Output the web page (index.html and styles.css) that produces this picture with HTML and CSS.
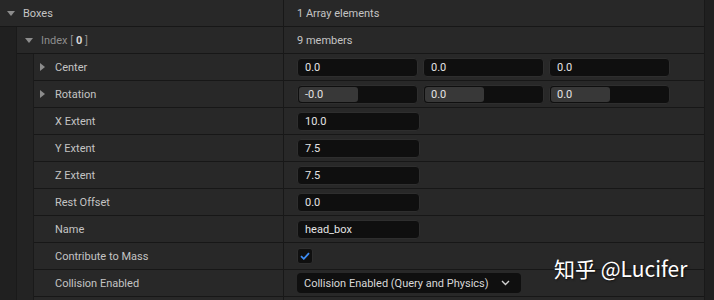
FILE: index.html
```html
<!DOCTYPE html>
<html lang="en">
<head>
    <meta charset="UTF-8">
    <title>Details - Boxes</title>
    <link rel="stylesheet" href="styles.css">
</head>
<body>
    <div class="panel">
        <div class="rows">
            <!-- Boxes -->
            <div class="row">
                <div class="name-col">
                    <div class="cell name lvl0"><span class="arrow-down"></span>Boxes</div>
                </div>
                <div class="cell value">1 Array elements</div>
            </div>

            <!-- Index [0] -->
            <div class="row">
                <div class="name-col">
                    <div class="strip"></div>
                    <div class="cell name lvl1"><span class="arrow-down"></span><span class="dim">Index [ <b>0</b> ]</span></div>
                </div>
                <div class="cell value">9 members</div>
            </div>

            <div class="row">
                <div class="name-col">
                    <div class="strip"></div><div class="strip"></div>
                    <div class="cell name lvl2 expander"><span class="arrow-right"></span>Center</div>
                </div>
                <div class="cell value">
                    <div class="field w121">0.0</div>
                    <div class="field w121">0.0</div>
                    <div class="field w121">0.0</div>
                </div>
            </div>

            <div class="row">
                <div class="name-col">
                    <div class="strip"></div><div class="strip"></div>
                    <div class="cell name lvl2 expander"><span class="arrow-right"></span>Rotation</div>
                </div>
                <div class="cell value">
                    <div class="field w121 slider"><span class="fill" style="width: 59px"></span><span class="num">-0.0</span></div>
                    <div class="field w121 slider"><span class="fill" style="width: 59px"></span><span class="num">0.0</span></div>
                    <div class="field w121 slider"><span class="fill" style="width: 59px"></span><span class="num">0.0</span></div>
                </div>
            </div>

            <div class="row">
                <div class="name-col">
                    <div class="strip"></div><div class="strip"></div>
                    <div class="cell name lvl2">X Extent</div>
                </div>
                <div class="cell value"><div class="field w123">10.0</div></div>
            </div>

            <div class="row">
                <div class="name-col">
                    <div class="strip"></div><div class="strip"></div>
                    <div class="cell name lvl2">Y Extent</div>
                </div>
                <div class="cell value"><div class="field w123">7.5</div></div>
            </div>

            <div class="row">
                <div class="name-col">
                    <div class="strip"></div><div class="strip"></div>
                    <div class="cell name lvl2">Z Extent</div>
                </div>
                <div class="cell value"><div class="field w123">7.5</div></div>
            </div>

            <div class="row">
                <div class="name-col">
                    <div class="strip"></div><div class="strip"></div>
                    <div class="cell name lvl2">Rest Offset</div>
                </div>
                <div class="cell value"><div class="field w123">0.0</div></div>
            </div>

            <div class="row">
                <div class="name-col">
                    <div class="strip"></div><div class="strip"></div>
                    <div class="cell name lvl2">Name</div>
                </div>
                <div class="cell value"><div class="field w123">head_box</div></div>
            </div>

            <div class="row">
                <div class="name-col">
                    <div class="strip"></div><div class="strip"></div>
                    <div class="cell name lvl2">Contribute to Mass</div>
                </div>
                <div class="cell value">
                    <div class="checkbox">
                        <svg width="10" height="8" viewBox="0 0 10 8"><path d="M1 4.2 L3.8 6.8 L9 1.2" fill="none" stroke="#3d8bf2" stroke-width="1.8"/></svg>
                    </div>
                </div>
            </div>

            <div class="row">
                <div class="name-col">
                    <div class="strip"></div><div class="strip"></div>
                    <div class="cell name lvl2">Collision Enabled</div>
                </div>
                <div class="cell value">
                    <div class="combo">Collision Enabled (Query and Physics)
                        <svg width="9" height="6" viewBox="0 0 9 6"><path d="M1 1 L4.5 4.5 L8 1" fill="none" stroke="#d0d0d0" stroke-width="1.4"/></svg>
                    </div>
                </div>
            </div>

            <div class="row">
                <div class="name-col">
                    <div class="strip"></div><div class="strip"></div>
                    <div class="cell name lvl2"></div>
                </div>
                <div class="cell value"></div>
            </div>
        </div>
        <div class="scrollbar"></div>
    </div>

    <div class="watermark">知乎 @Lucifer</div>
</body>
</html>
```

FILE: styles.css
```css
* {
    margin: 0;
    padding: 0;
    box-sizing: border-box;
}

body {
    font-family: Roboto, "Liberation Sans", sans-serif;
    font-size: 11px;
    color: #c4c4c4;
    background-color: #1c1c1c;
    width: 714px;
    height: 300px;
    overflow: hidden;
    position: relative;
}

/* Painel de detalhes */
.panel {
    display: flex;
    height: 300px;
    overflow: hidden;
}

.rows {
    width: 704px;
    display: flex;
    flex-direction: column;
}

.row {
    display: grid;
    grid-template-columns: 284px 1fr;
    height: 27px;
    flex: none;
}

.name-col {
    display: flex;
    border-right: 1px solid #181818;
}

/* Faixas de indentação */
.strip {
    width: 17px;
    flex: none;
    background-color: #202020;
    border-right: 1px solid #1a1a1a;
}

.strip + .strip {
    background-color: #232323;
}

.cell {
    display: flex;
    align-items: center;
    background-color: #282828;
    border-bottom: 1px solid #171717;
}

.name {
    flex: 1;
}

.lvl0 {
    padding-left: 7px;
}

.lvl1 {
    padding-left: 8px;
}

.lvl2 {
    padding-left: 21px;
}

.lvl2.expander {
    padding-left: 6px;
}

.value {
    padding-left: 13px;
    gap: 5px;
}

.dim {
    color: #8d8d8d;
}

.dim b {
    color: #d8d8d8;
    font-weight: bold;
}

/* Setas */
.arrow-down {
    width: 0;
    height: 0;
    border-left: 4px solid transparent;
    border-right: 4px solid transparent;
    border-top: 5px solid #8c8c8c;
    margin-right: 8px;
}

.arrow-right {
    width: 0;
    height: 0;
    border-top: 4px solid transparent;
    border-bottom: 4px solid transparent;
    border-left: 5px solid #8c8c8c;
    margin-right: 10px;
}

/* Campos */
.field {
    height: 19px;
    background-color: #0f0f0f;
    border: 1px solid #2e2e2e;
    border-radius: 4px;
    color: #e4e4e4;
    padding-left: 7px;
    display: flex;
    align-items: center;
    position: relative;
    overflow: hidden;
}

.w121 {
    width: 121px;
}

.w123 {
    width: 123px;
}

.slider {
    padding-left: 0;
}

.slider .fill {
    position: absolute;
    left: 1px;
    top: 1px;
    bottom: 1px;
    background-color: #383838;
    border-radius: 3px;
}

.slider .num {
    position: relative;
    padding-left: 7px;
}

.checkbox {
    width: 16px;
    height: 16px;
    background-color: #0f0f0f;
    border: 1px solid #2e2e2e;
    border-radius: 3px;
    display: flex;
    align-items: center;
    justify-content: center;
}

.combo {
    width: 224px;
    height: 20px;
    background-color: #0f0f0f;
    border-radius: 4px;
    color: #d8d8d8;
    padding-left: 7px;
    padding-right: 11px;
    display: flex;
    align-items: center;
    justify-content: space-between;
}

.scrollbar {
    width: 10px;
    background-color: #202020;
    border-left: 1px solid #191919;
}

/* Marca d'água */
.watermark {
    position: absolute;
    left: 554px;
    top: 253px;
    font-family: "Noto Sans CJK SC", sans-serif;
    font-size: 21px;
    color: #ffffff;
    text-shadow: 1px 1px 2px rgba(0, 0, 0, 0.6);
}
```
